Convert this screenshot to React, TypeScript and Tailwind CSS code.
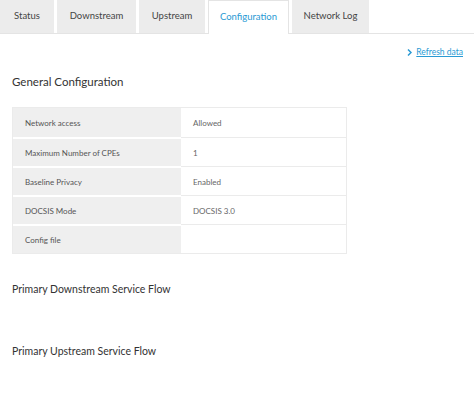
import React from "react";

const tabs = ["Status", "Downstream", "Upstream", "Configuration", "Network Log"];
const widths = ["w-[54px]", "w-[79px]", "w-[66px]", "w-[81px]", "w-[77px]"];

const rows: [string, string][] = [
  ["Network access", "Allowed"],
  ["Maximum Number of CPEs", "1"],
  ["Baseline Privacy", "Enabled"],
  ["DOCSIS Mode", "DOCSIS 3.0"],
  ["Config file", ""],
];

export default function App() {
  return (
    <div className="w-[474px] h-[414px] bg-white overflow-hidden font-['Lato','Open_Sans',sans-serif] text-[#333]">
      <div className="flex h-[34px] border-b border-[#e4e4e4]">
        {tabs.map((t, i) => (
          <div
            key={t}
            className={`${widths[i]} mr-[3px] flex items-center justify-center text-[9.5px] ${
              i === 3
                ? "bg-white text-[#2a9ad4] border-x border-t border-[#e4e4e4] -mb-px"
                : "bg-[#ececec] text-[#444]"
            }`}
          >
            {t}
          </div>
        ))}
      </div>
      <div className="flex justify-end pr-[11px] pt-[10px] h-[27px]">
        <a className="flex items-center gap-[4px] text-[8.5px] text-[#2a9ad4] underline">
          <svg width="5" height="7" viewBox="0 0 5 7">
            <path d="M1 0.5 L4 3.5 L1 6.5" stroke="#2a9ad4" strokeWidth="1.5" fill="none" />
          </svg>
          Refresh data
        </a>
      </div>
      <div className="pl-[12px] pt-[12px] text-[11.5px] text-[#333]">General Configuration</div>
      <div className="ml-[12px] mt-[17px] w-[335px] border border-[#ebebeb]">
        {rows.map(([l, v], i) => (
          <div key={l} className={`flex h-[29px] ${i > 0 ? "border-t-2 border-white" : ""}`}>
            <div className="w-[168px] bg-[#efefef] flex items-center pl-[12px] text-[8px] text-[#555]">
              {l}
            </div>
            <div className={`flex-1 bg-white flex items-center pl-[12px] text-[8px] text-[#666] ${i > 0 ? "border-t border-[#ebebeb] -mt-[2px] pt-[2px]" : ""}`}>
              {v}
            </div>
          </div>
        ))}
      </div>
      <div className="pl-[12px] mt-[28px] text-[10.5px] text-[#333]">Primary Downstream Service Flow</div>
      <div className="pl-[12px] mt-[46px] text-[10.5px] text-[#333]">Primary Upstream Service Flow</div>
    </div>
  );
}
